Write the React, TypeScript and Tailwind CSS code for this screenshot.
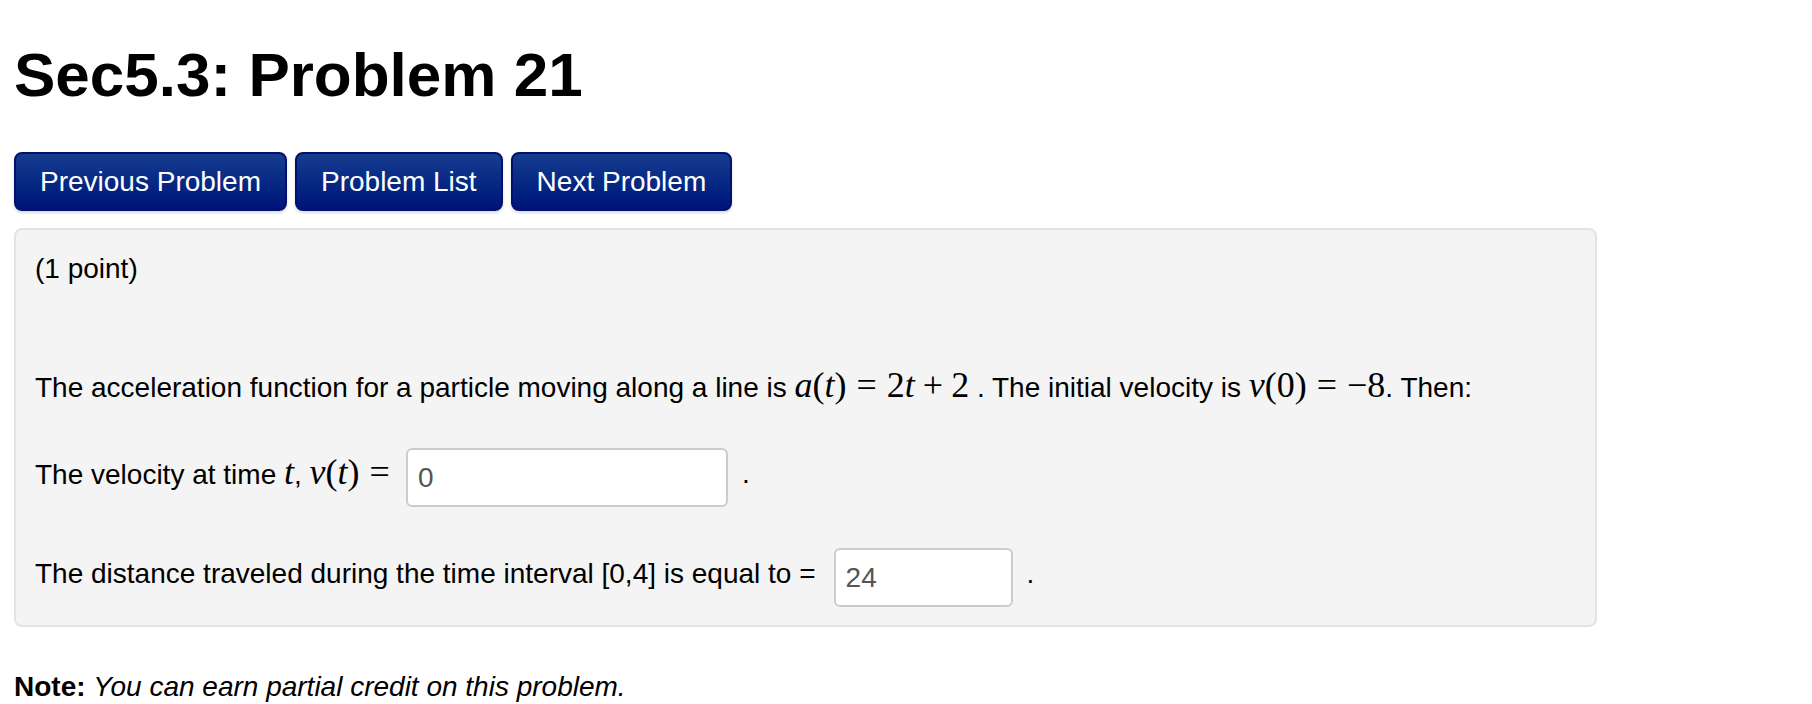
import React from 'react';

const NavButton = ({ label }: { label: string }) => (
  <button className="h-[59px] px-[24px] rounded-[8px] border-2 border-[#00116e] bg-gradient-to-b from-[#173c8f] to-[#001279] text-white text-[28px] leading-[40px] shadow-[0_2px_3px_rgba(0,0,0,0.15)]">
    {label}
  </button>
);

const Math = ({ children }: { children: React.ReactNode }) => (
  <span className="font-['Liberation_Serif',serif] text-[36px]">{children}</span>
);

const V = ({ children }: { children: React.ReactNode }) => <span className="italic">{children}</span>;

const Rel = ({ children }: { children: React.ReactNode }) => <span className="mx-[0.278em]">{children}</span>;

const Bin = ({ children }: { children: React.ReactNode }) => <span className="mx-[0.222em]">{children}</span>;

const AnswerBox = ({ value, width }: { value: string; width: string }) => (
  <input
    readOnly
    value={value}
    className={`${width} h-[59px] rounded-[6px] border-2 border-[#cccccc] bg-white pl-[10px] text-[28px] text-[#555555] font-['Liberation_Sans',sans-serif] outline-none`}
  />
);

export default function App() {
  return (
    <div className="min-h-screen bg-white px-[14px] font-['Liberation_Sans',Arial,sans-serif] text-black">
      <h1 className="pt-[40px] text-[62px] font-bold leading-[70px]">Sec5.3: Problem 21</h1>

      <div className="mt-[42px] flex gap-[8px]">
        <NavButton label="Previous Problem" />
        <NavButton label="Problem List" />
        <NavButton label="Next Problem" />
      </div>

      <div className="mt-[17px] w-[1583px] rounded-[8px] border-2 border-[#e3e3e3] bg-[#f4f4f4] px-[19px] pt-[19px] pb-[18px] text-[28px] leading-[40px]">
        <p>(1 point)</p>

        <p className="mt-[76px]">
          The acceleration function for a particle moving along a line is{' '}
          <Math>
            <V>a</V>(<V>t</V>)<Rel>=</Rel>2<V>t</V>
            <Bin>+</Bin>2
          </Math>{' '}
          . The initial velocity is{' '}
          <Math>
            <V>v</V>(0)<Rel>=</Rel>−8
          </Math>
          . Then:
        </p>

        <div className="mt-[40px] flex h-[59px] items-center">
          <span className="mb-[8px]">
            The velocity at time{' '}
            <Math>
              <V>t</V>
            </Math>
            ,{' '}
            <Math>
              <V>v</V>(<V>t</V>)<Rel>=</Rel>
            </Math>
          </span>
          <span className="ml-[6px]" />
          <AnswerBox value="0" width="w-[322px]" />
          <span className="ml-[14px] mb-[8px]">.</span>
        </div>

        <div className="mt-[41px] flex h-[59px] items-center">
          <span className="mb-[8px]">The distance traveled during the time interval [0,4] is equal to =</span>
          <span className="ml-[18px]" />
          <AnswerBox value="24" width="w-[179px]" />
          <span className="ml-[14px] mb-[8px]">.</span>
        </div>
      </div>

      <p className="mt-[40px] text-[28px] leading-[40px]">
        <span className="font-bold">Note:</span> <span className="italic">You can earn partial credit on this problem.</span>
      </p>
    </div>
  );
}
